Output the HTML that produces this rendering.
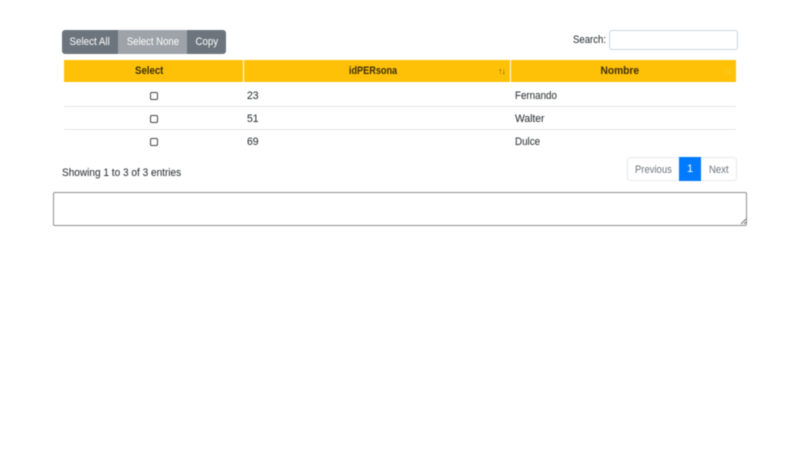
<!DOCTYPE html>
<html lang="es"><head><meta charset="utf-8"><title>Tabla</title>
<style>
html,body{margin:0;padding:0;background:#fff}
body{width:800px;height:450px;position:relative;overflow:hidden;font-family:"Liberation Sans",sans-serif;font-size:11px;color:#212529}
#w{position:absolute;left:0;top:0;width:800px;height:450px;filter:blur(.4px)}
.a{position:absolute;white-space:nowrap;line-height:16px;transform-origin:0 50%}
.b{position:absolute;top:30px;height:24px;line-height:24px;color:#fff;text-align:center;background:#6c757d}
.b span,.th span{display:inline-block;white-space:nowrap}
.h{position:absolute;top:60px;height:22px;background:#ffc107}
.th{position:absolute;top:63px;font-weight:bold;text-align:center;line-height:16px;color:#3b2f0c}
.l{position:absolute;left:64px;width:672px;height:1px;background:#e3e6e9}
.cb{position:absolute;left:150px;width:6px;height:6px;border:1.2px solid #444;border-radius:2px}
.s{position:absolute;top:65px;font-size:9px;line-height:12px;letter-spacing:-1px}
</style></head><body><div id="w">
<div class="b" style="left:62px;width:56px;border-radius:3px 0 0 3px"><span style="transform:scaleX(.89)">Select All</span></div>
<div class="b" style="left:118px;width:69px;background:#9da3a9"><span style="transform:scaleX(.87)">Select None</span></div>
<div class="b" style="left:187px;width:39px;border-radius:0 3px 3px 0"><span style="transform:scaleX(.88)">Copy</span></div>
<div class="a" style="left:573px;top:32px;transform:scaleX(.87)">Search:</div>
<div style="position:absolute;left:609px;top:30px;width:127px;height:18px;border:1px solid #ced4da;border-radius:3px"></div>
<div class="h" style="left:64px;width:179px"></div>
<div class="h" style="left:244px;width:266px"></div>
<div class="h" style="left:511px;width:225px"></div>
<div class="th" style="left:64px;width:170px"><span style="transform:scaleX(.875)">Select</span></div>
<div class="th" style="left:244px;width:258px"><span style="transform:scaleX(.83)">idPERsona</span></div>
<div class="th" style="left:511px;width:218px"><span style="transform:scaleX(.93)">Nombre</span></div>
<div class="s" style="left:498px;color:#7a5f10">↑↓</div>
<div class="s" style="left:724px;color:#f2d468">↑↓</div>
<div class="l" style="top:106px"></div>
<div class="l" style="top:129px"></div>
<div class="cb" style="top:92px"></div>
<div class="cb" style="top:115px"></div>
<div class="cb" style="top:138px"></div>
<div class="a" style="left:247px;top:88px;transform:scaleX(.95)">23</div>
<div class="a" style="left:247px;top:111px;transform:scaleX(.95)">51</div>
<div class="a" style="left:247px;top:134px;transform:scaleX(.95)">69</div>
<div class="a" style="left:515px;top:88px;transform:scaleX(.89)">Fernando</div>
<div class="a" style="left:515px;top:111px;transform:scaleX(.94)">Walter</div>
<div class="a" style="left:515px;top:134px;transform:scaleX(.89)">Dulce</div>
<div class="a" style="left:62px;top:165px;transform:scaleX(.915)">Showing 1 to 3 of 3 entries</div>
<div style="position:absolute;left:627px;top:157px;width:108px;height:22px;border:1px solid #e6e9ec;border-radius:3px"></div>
<div class="a" style="left:635px;top:162px;color:#6c757d;transform:scaleX(.86)">Previous</div>
<div style="position:absolute;left:679px;top:157px;width:22px;height:24px;line-height:25px;background:#007bff;color:#fff;text-align:center">1</div>
<div class="a" style="left:709px;top:162px;color:#6c757d;transform:scaleX(.87)">Next</div>
<div style="position:absolute;left:53px;top:192px;width:692px;height:32px;border:1px solid #8f8f8f;border-radius:2px"></div>
<svg style="position:absolute;left:740px;top:218px" width="7" height="7" viewBox="0 0 7 7"><path d="M1 6L6 1M4 6L6 4" stroke="#777" stroke-width="1" fill="none"/></svg>
</div></body></html>
